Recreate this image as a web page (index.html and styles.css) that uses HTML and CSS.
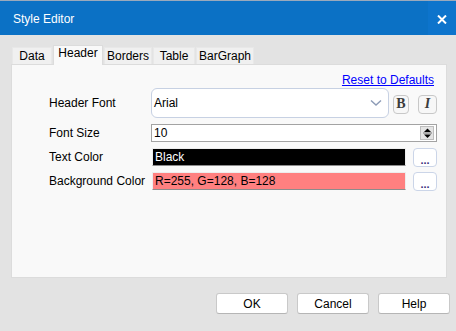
FILE: index.html
```html
<!DOCTYPE html>
<html lang="en">

<head>
    <meta charset="UTF-8">
    <meta name="viewport" content="width=device-width, initial-scale=1.0">
    <title>Style Editor</title>
    <link rel="stylesheet" href="styles.css">
</head>

<body>
    <div class="window">
        <div class="titlebar">
            <span class="title">Style Editor</span>
            <span class="close">
                <svg width="10" height="9" viewBox="0 0 10 9">
                    <path d="M1 0.5 L9 8.5 M9 0.5 L1 8.5" stroke="#fff" stroke-width="2" />
                </svg>
            </span>
        </div>

        <div class="tabs">
            <div class="tab tab-data">Data</div>
            <div class="tab tab-header active">Header</div>
            <div class="tab tab-borders">Borders</div>
            <div class="tab tab-table">Table</div>
            <div class="tab tab-bargraph">BarGraph</div>
        </div>

        <div class="panel">
            <div class="reset-row">
                <a class="reset-link" href="#">Reset to Defaults</a>
            </div>

            <div class="form">
                <label class="field-label">Header Font</label>
                <div class="font-row">
                    <div class="combo">
                        <span>Arial</span>
                        <svg class="chevron" width="12" height="8" viewBox="0 0 12 8">
                            <path d="M1 1.5 L6 6 L11 1.5" fill="none" stroke="#8c9bb6" stroke-width="1.4" />
                        </svg>
                    </div>
                    <button class="style-btn bold-btn">B</button>
                    <button class="style-btn italic-btn">I</button>
                </div>

                <label class="field-label">Font Size</label>
                <div class="spin-input">
                    <span>10</span>
                    <div class="spinner">
                        <svg width="11" height="12" viewBox="0 0 11 12">
                            <path d="M2 5 L5.5 1.5 L9 5 Z" fill="#000" />
                            <line x1="1" y1="6" x2="10" y2="6" stroke="#777" stroke-width="1" />
                            <path d="M2 7.5 L9 7.5 L5.5 11 Z" fill="#000" />
                        </svg>
                    </div>
                </div>

                <label class="field-label">Text Color</label>
                <div class="color-row">
                    <div class="color-box color-black">Black</div>
                    <button class="dots-btn">...</button>
                </div>

                <label class="field-label">Background Color</label>
                <div class="color-row">
                    <div class="color-box color-pink">R=255, G=128, B=128</div>
                    <button class="dots-btn">...</button>
                </div>
            </div>
        </div>

        <div class="actions">
            <button class="dlg-btn">OK</button>
            <button class="dlg-btn">Cancel</button>
            <button class="dlg-btn">Help</button>
        </div>
    </div>
</body>

</html>
```

FILE: styles.css
```css
body {
    margin: 0;
    font-family: 'Liberation Sans', Arial, sans-serif;
    font-size: 12px;
    color: #000;
    background-color: #e3e3e3;
}

.window {
    width: 456px;
    height: 331px;
    background-color: #e3e3e3;
    overflow: hidden;
}

.titlebar {
    height: 34px;
    border-top: 1px solid #9aa9bc;
    background-color: #0b71c5;
    display: flex;
    align-items: center;
    justify-content: space-between;
    color: #fff;
}

.title {
    padding-left: 13px;
    font-size: 12px;
    padding-top: 2px;
}

.close {
    width: 28px;
    height: 34px;
    display: flex;
    align-items: center;
    justify-content: center;
    background-color: #0d74cc;
    padding-top: 2px;
    box-sizing: border-box;
}

/* tabs */
.tabs {
    display: flex;
    align-items: flex-end;
    height: 19px;
    margin-top: 10px;
    padding-left: 12px;
}

.tab {
    box-sizing: border-box;
    height: 17px;
    line-height: 16px;
    background-color: #f0f0f0;
    border: 1px solid #e8e8e8;
    border-bottom: none;
    text-align: center;
    margin-right: 1px;
}

.tab.active {
    height: 20px;
    line-height: 14px;
    background-color: #f9f9f9;
    border-color: #dcdcdc;
    margin-bottom: -1px;
    position: relative;
    z-index: 1;
}

.tab-data { width: 40px; }
.tab-header { width: 50px; }
.tab-borders { width: 48px; }
.tab-table { width: 42px; }
.tab-bargraph { width: 58px; }

/* panel */
.panel {
    box-sizing: border-box;
    width: 436px;
    height: 214px;
    margin-left: 11px;
    background-color: #f9f9f9;
    border: 1px solid #dcdcdc;
    padding: 7px 12px 0 37px;
}

.reset-row {
    height: 16px;
    text-align: right;
}

.reset-link {
    color: #0000ff;
    text-decoration: underline;
    line-height: 16px;
}

.form {
    display: grid;
    grid-template-columns: 102px 286px;
    grid-template-rows: 30px 18px 18px 18px;
    row-gap: 6px;
    align-items: center;
}

.field-label {
    padding-bottom: 1px;
}

.font-row {
    display: flex;
    align-items: center;
}

.combo {
    box-sizing: border-box;
    width: 238px;
    height: 30px;
    background-color: #fff;
    border: 1px solid #c7d1e3;
    border-radius: 6px;
    display: flex;
    align-items: center;
    justify-content: space-between;
    padding: 0 6px 0 2px;
}

.style-btn {
    box-sizing: border-box;
    height: 19px;
    margin-top: 2px;
    padding: 0;
    background-color: #f7f7f7;
    border: 1px solid #c8c8c8;
    border-radius: 4px;
    font-family: 'Liberation Serif', 'Times New Roman', serif;
    font-weight: bold;
    font-size: 14px;
    color: #3c3c3c;
    line-height: 16px;
}

.bold-btn {
    width: 16px;
    margin-left: 4px;
}

.italic-btn {
    width: 19px;
    margin-left: 9px;
    font-style: italic;
}

.spin-input {
    box-sizing: border-box;
    width: 286px;
    height: 18px;
    background-color: #fff;
    border: 1px solid #a3a3a3;
    display: flex;
    align-items: center;
    justify-content: space-between;
    padding-left: 2px;
    padding-right: 2px;
}

.spinner {
    box-sizing: border-box;
    width: 14px;
    height: 14px;
    background-color: #e4e4e4;
    border: 1px solid #bdbdbd;
    display: flex;
    align-items: center;
    justify-content: center;
}

.color-row {
    display: flex;
    align-items: center;
    gap: 7px;
}

.color-box {
    box-sizing: border-box;
    width: 255px;
    height: 18px;
    margin-left: 1px;
    border: 1px solid #ededed;
    border-bottom-color: #8c8c8c;
    padding-left: 2px;
    line-height: 16px;
}

.color-black {
    background-color: #000;
    color: #fff;
}

.color-pink {
    background-color: #ff8080;
    color: #000;
}

.dots-btn {
    box-sizing: border-box;
    width: 24px;
    height: 19px;
    padding: 6px 0 0;
    background-color: #fff;
    border: 1px solid #cbd5e8;
    border-radius: 4px;
    font-family: 'Liberation Sans', Arial, sans-serif;
    font-size: 11px;
    font-weight: bold;
    color: #3a2f7a;
    line-height: 10px;
}

/* dialog buttons */
.actions {
    display: flex;
    justify-content: flex-end;
    gap: 9px;
    margin-top: 15px;
    padding-right: 6px;
}

.dlg-btn {
    box-sizing: border-box;
    width: 72px;
    height: 21px;
    padding: 0;
    background-color: #fff;
    border: 1px solid #c9c9c9;
    border-bottom-color: #b5b5b5;
    border-radius: 3px;
    font-family: 'Liberation Sans', Arial, sans-serif;
    font-size: 12px;
    color: #000;
}
```
